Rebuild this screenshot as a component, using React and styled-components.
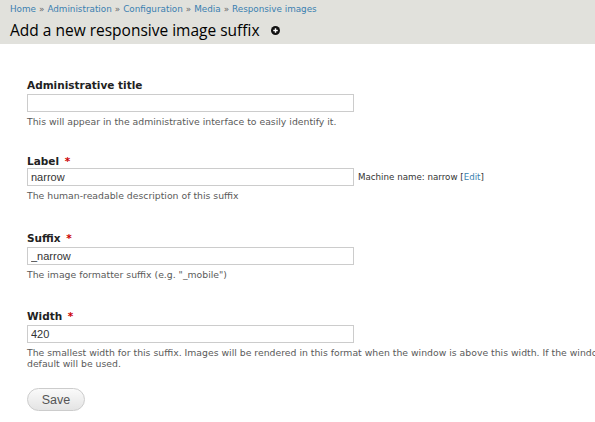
import React from "react";
import styled, { createGlobalStyle } from "styled-components";

const Global = createGlobalStyle`
  html, body { margin: 0; padding: 0; background: #fff; }
  body { font-family: "DejaVu Sans", Verdana, sans-serif; color: #333; overflow: hidden; }
`;

const Header = styled.header`
  background: #e1e1dc;
  height: 44px;
  padding: 3px 10px 0;
  box-sizing: border-box;
`;

const Breadcrumb = styled.nav`
  font-size: 8.8px;
  line-height: 13px;
  a { color: #3a7fb0; text-decoration: none; }
  span { color: #666; margin: 0 3px; }
`;

const Title = styled.h1`
  margin: 3px 0 0;
  font-family: "Open Sans", "DejaVu Sans", sans-serif;
  font-size: 15.5px;
  font-weight: normal;
  color: #000;
  display: flex;
  align-items: center;
  gap: 11px;
  line-height: 22px;
`;

const Form = styled.form`
  padding: 35px 27px 0;
  display: flex;
  flex-direction: column;
`;

const Field = styled.div`
  margin-bottom: ${(p) => p.gap ?? 30}px;
`;

const Label = styled.label`
  display: block;
  font-weight: bold;
  font-size: 10.5px;
  line-height: 13px;
  color: #222;
`;

const Req = styled.span`
  color: #c00;
  margin-left: 2px;
`;

const Row = styled.div`
  display: flex;
  align-items: center;
  gap: 4px;
`;

const Input = styled.input`
  box-sizing: border-box;
  width: 327px;
  height: 18px;
  border: 1px solid #ccc;
  padding: 0 3px;
  font-family: "Liberation Sans", Arial, sans-serif;
  font-size: 11px;
  color: #333;
  outline: none;
`;

const Machine = styled.span`
  font-size: 8.7px;
  color: #333;
  a { color: #3a7fb0; text-decoration: none; }
`;

const Desc = styled.div`
  font-size: 9.3px;
  line-height: 11px;
  color: #5a5a5a;
  margin-top: 4px;
  white-space: nowrap;
`;

const Button = styled.button`
  align-self: flex-start;
  width: 58px;
  height: 23px;
  border-radius: 12px;
  border: 1px solid #ccc;
  background: linear-gradient(#fafafa, #e4e4e4);
  font-family: "Liberation Sans", Arial, sans-serif;
  font-size: 12.5px;
  color: #555;
`;

const PlusIcon = () => (
  <svg width="9" height="9" viewBox="0 0 10 10">
    <circle cx="5" cy="5" r="5" fill="#111" />
    <rect x="2.5" y="4.2" width="5" height="1.6" fill="#fff" />
    <rect x="4.2" y="2.5" width="1.6" height="5" fill="#fff" />
  </svg>
);

export default function App() {
  return (
    <>
      <Global />
      <Header>
        <Breadcrumb>
          <a href="#">Home</a><span>»</span>
          <a href="#">Administration</a><span>»</span>
          <a href="#">Configuration</a><span>»</span>
          <a href="#">Media</a><span>»</span>
          <a href="#">Responsive images</a>
        </Breadcrumb>
        <Title>
          Add a new responsive image suffix <PlusIcon />
        </Title>
      </Header>
      <Form>
        <Field gap={28}>
          <Label>Administrative title</Label>
          <Input defaultValue="" />
          <Desc>This will appear in the administrative interface to easily identify it.</Desc>
        </Field>
        <Field gap={31}>
          <Label>Label <Req>*</Req></Label>
          <Row>
            <Input defaultValue="narrow" />
            <Machine>Machine name: narrow [<a href="#">Edit</a>]</Machine>
          </Row>
          <Desc>The human-readable description of this suffix</Desc>
        </Field>
        <Field gap={30}>
          <Label>Suffix <Req>*</Req></Label>
          <Input defaultValue="_narrow" />
          <Desc>The image formatter suffix (e.g. "_mobile")</Desc>
        </Field>
        <Field gap={19}>
          <Label>Width <Req>*</Req></Label>
          <Input defaultValue="420" />
          <Desc>
            The smallest width for this suffix. Images will be rendered in this format when the window is above this width. If the window is smaller than all widths the
            <br />
            default will be used.
          </Desc>
        </Field>
        <Button type="button">Save</Button>
      </Form>
    </>
  );
}
